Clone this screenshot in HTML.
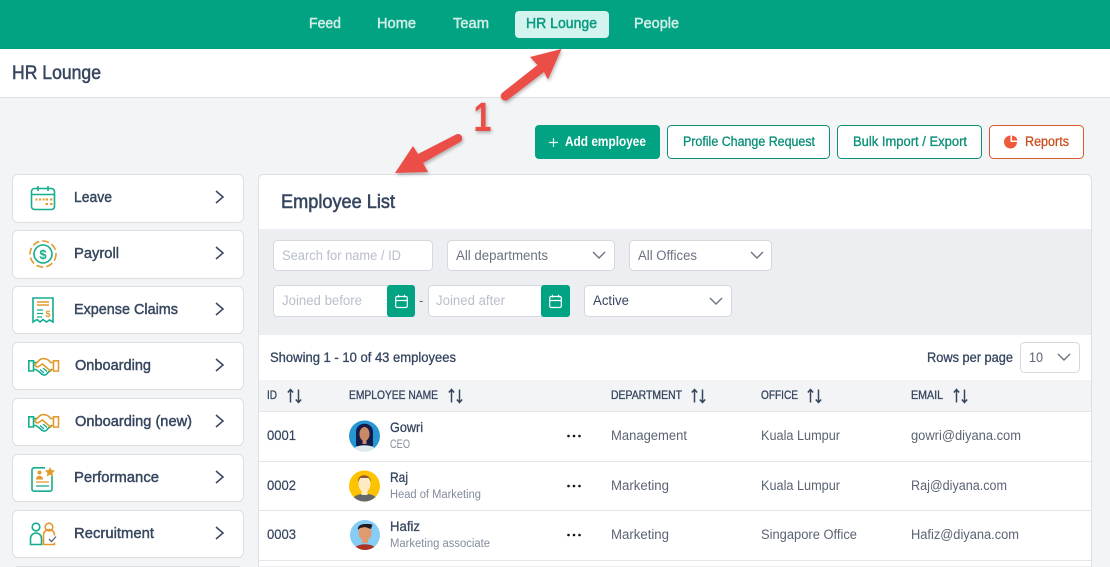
<!DOCTYPE html>
<html lang="en"><head><meta charset="utf-8"><title>HR Lounge</title>
<style>
html,body{margin:0;padding:0;width:1110px;height:567px;overflow:hidden;background:#f3f4f6}
svg{display:block;font-family:"Liberation Sans",Arial,sans-serif}
.n{font-size:15px;fill:#cfeee7;stroke:#cfeee7;stroke-width:.5}
.m{font-size:15px;fill:#36465f;stroke:#36465f;stroke-width:.45}
.ph{font-size:13.500px;fill:#b9bfca}
.sel{font-size:13.500px;fill:#6b7280}
.hd{font-size:11.500px;fill:#36465f;stroke:#36465f;stroke-width:.3}
.c{font-size:13.500px;fill:#5b6474}
.id{font-size:14px;fill:#36465f;stroke:#36465f;stroke-width:.2}
.nm{font-size:14px;fill:#36465f;stroke:#36465f;stroke-width:.3}
.sub{font-size:11.500px;fill:#838b9c}
.arr{fill:none;stroke:#36465f;stroke-width:1.500}
.g{fill:none;stroke:#14ad8e;stroke-width:1.600}
.o{fill:none;stroke:#e39a2d;stroke-width:1.600}
</style></head><body>
<svg width="1110" height="567" viewBox="0 0 1110 567" xmlns="http://www.w3.org/2000/svg">
<defs>
<filter id="sh" x="-20%" y="-20%" width="140%" height="140%"><feDropShadow dx="1" dy="2" stdDeviation="1.500" flood-color="#000" flood-opacity=".28"/></filter>
<g id="sort"><path class="arr" d="M3.500 14V1M.8 4L3.500 1 6.200 4M11.500 1V14M8.800 11L11.500 14 14.200 11"/></g>
<path id="chev" d="M0 0L7 6 0 12" fill="none" stroke="#36465f" stroke-width="1.500"/>
<path id="dn" d="M0 0L6 6 12 0" fill="none" stroke="#6b7280" stroke-width="1.400"/>
<g id="cal"><rect x="0.700" y="2.500" width="11.600" height="11" rx="1.500" fill="none" stroke="#fff" stroke-width="1.200"/><path d="M.7 6.500H12.300M3.500 .8V3.500M9.500 .8V3.500" stroke="#fff" stroke-width="1.200" fill="none"/></g>
<g id="hs">
<path class="g" d="M.8 3.800H5.500V14H.8zM5.500 5.500H8.500M5.500 12.500H8M8 12.500l6.500 5c2 1 4 .5 5-1.500l4.500-4"/>
<path d="M12 12.500l4 3.500M15 11l4 3.500" stroke="#14ad8e" stroke-width="1.300" fill="none"/>
<path class="o" d="M25.500 3.800h5v10.200h-5zM25.500 5.500h-3c-2-4-8-5-11-2.500l-4 4c-1 2 1 3.500 3 2.500l4-2.500 8 7 2-2"/>
</g>
</defs>

<rect width="1110" height="567" fill="#f3f4f6"/>
<!-- top bar -->
<rect width="1110" height="49" fill="#02a382"/>
<rect x="515" y="11" width="94" height="27" rx="4" fill="#d3f4ee"/>
<text class="n" x="309" y="28" textLength="32" lengthAdjust="spacingAndGlyphs">Feed</text>
<text class="n" x="377" y="28" textLength="39" lengthAdjust="spacingAndGlyphs">Home</text>
<text class="n" x="453" y="28" textLength="36" lengthAdjust="spacingAndGlyphs">Team</text>
<text class="n" x="526" y="28" textLength="71" lengthAdjust="spacingAndGlyphs" style="fill:#0b9a80;stroke:#0b9a80">HR Lounge</text>
<text class="n" x="634" y="28" textLength="45" lengthAdjust="spacingAndGlyphs">People</text>
<!-- sub header -->
<rect y="49" width="1110" height="48" fill="#fff"/>
<rect y="97" width="1110" height="1" fill="#dfe1e5"/>
<text x="12" y="79" font-size="19" fill="#36465f" textLength="89" lengthAdjust="spacingAndGlyphs" style="stroke:#36465f;stroke-width:.5">HR Lounge</text>

<!-- buttons -->
<rect x="535" y="125" width="125" height="34" rx="4" fill="#02a382"/>
<path d="M549 142.500h9M553.500 138v9" stroke="#e6f7f3" stroke-width="1.200"/>
<text x="565" y="146" font-size="14" font-weight="700" fill="#fff" textLength="81" lengthAdjust="spacingAndGlyphs">Add employee</text>
<rect x="667.500" y="125.500" width="162" height="33" rx="4" fill="#fff" stroke="#0a8f78"/>
<text x="683" y="146" font-size="13.500" fill="#0a8f78" textLength="132" lengthAdjust="spacingAndGlyphs" style="stroke:#0a8f78;stroke-width:.3">Profile Change Request</text>
<rect x="837.500" y="125.500" width="144" height="33" rx="4" fill="#fff" stroke="#0a8f78"/>
<text x="853" y="146" font-size="13.500" fill="#0a8f78" textLength="114" lengthAdjust="spacingAndGlyphs" style="stroke:#0a8f78;stroke-width:.3">Bulk Import / Export</text>
<rect x="989.500" y="125.500" width="94" height="33" rx="4" fill="#fff" stroke="#d95a2b"/>
<path d="M1010.500 135.500v6.500h6.500a6.500 6.500 0 1 1-6.500-6.500z" fill="#f0593b"/><path d="M1012 135.500a6 6 0 0 1 5.500 5h-5.500z" fill="#f0593b"/>
<text x="1025" y="146" font-size="13.500" fill="#c8501f" textLength="44" lengthAdjust="spacingAndGlyphs" style="stroke:#c8501f;stroke-width:.3">Reports</text>

<!-- sidebar cards -->
<g fill="#fff" stroke="#dcdfe3">
<rect x="12.500" y="174.500" width="231" height="48" rx="5"/>
<rect x="12.500" y="230.500" width="231" height="48" rx="5"/>
<rect x="12.500" y="286.500" width="231" height="47" rx="5"/>
<rect x="12.500" y="342.500" width="231" height="47" rx="5"/>
<rect x="12.500" y="398.500" width="231" height="47" rx="5"/>
<rect x="12.500" y="454.500" width="231" height="47" rx="5"/>
<rect x="12.500" y="510.500" width="231" height="47" rx="5"/>
</g>
<rect x="16" y="566" width="224" height="1" fill="#dcdfe3"/>
<text class="m" x="74" y="202" textLength="38" lengthAdjust="spacingAndGlyphs">Leave</text>
<text class="m" x="74" y="258" textLength="45" lengthAdjust="spacingAndGlyphs">Payroll</text>
<text class="m" x="74" y="314" textLength="104" lengthAdjust="spacingAndGlyphs">Expense Claims</text>
<text class="m" x="75" y="370" textLength="76" lengthAdjust="spacingAndGlyphs">Onboarding</text>
<text class="m" x="75" y="426" textLength="117" lengthAdjust="spacingAndGlyphs">Onboarding (new)</text>
<text class="m" x="74" y="482" textLength="85" lengthAdjust="spacingAndGlyphs">Performance</text>
<text class="m" x="74" y="538" textLength="80" lengthAdjust="spacingAndGlyphs">Recruitment</text>
<use href="#chev" x="216" y="191"/><use href="#chev" x="216" y="247"/><use href="#chev" x="216" y="303"/><use href="#chev" x="216" y="359"/><use href="#chev" x="216" y="415"/><use href="#chev" x="216" y="471"/><use href="#chev" x="216" y="527"/>

<!-- leave icon -->
<rect class="g" x="31.500" y="188.500" width="23" height="21" rx="3"/>
<path class="g" d="M31.500 194.500h23M38 186v5M48 186v5"/>
<path d="M35.500 199.500h2M39 199.500h2M42.500 199.500h2M45.500 199.500h2.500M50 199.500h2.500M45.500 204h2.500M50 204h2.500" stroke="#e39a2d" stroke-width="2" fill="none"/>
<!-- payroll -->
<circle cx="43" cy="254" r="13" fill="none" stroke="#e39a2d" stroke-width="1.600" stroke-dasharray="7 3"/>
<circle class="g" cx="43" cy="254" r="9"/>
<text x="43" y="259" text-anchor="middle" font-size="13" font-weight="700" fill="#14ad8e">$</text>
<!-- expense -->
<path class="g" d="M33 298h20v24l-3.500-2-3 2-3.500-2.500-3 2.500-3-2.500-4 2.500z"/>
<path d="M37 302h12M37 305h12" stroke="#e39a2d" stroke-width="1.400"/>
<path d="M37 310h6M37 313.500h6M37 317h5" stroke="#14ad8e" stroke-width="1.200"/>
<text x="48" y="317" text-anchor="middle" font-size="9" font-weight="700" fill="#e39a2d">$</text>
<!-- onboarding -->
<use href="#hs" x="28" y="357"/>
<use href="#hs" x="28" y="413"/>
<!-- performance -->
<path class="g" d="M45 467.800H34a2 2 0 0 0-2 2v19.400a2 2 0 0 0 2 2h16a2 2 0 0 0 2-2V476"/>
<circle cx="39.500" cy="472.500" r="2" fill="#e39a2d"/>
<path d="M36 479.500c0-5 7-5 7 0z" fill="#e39a2d"/>
<path d="M36 482h13" stroke="#e39a2d" stroke-width="1.300"/><path d="M36 486h13" stroke="#14ad8e" stroke-width="1.300"/>
<path d="M50 467l1.500 3 3.500.5-2.500 2.500.7 3.500-3.200-1.700-3.200 1.700.7-3.500-2.500-2.500 3.500-.5z" fill="#e39a2d"/>
<!-- recruitment -->
<circle class="g" cx="36" cy="527" r="3.800"/>
<path class="g" d="M30.500 544.500v-6a5.500 5.500 0 0 1 11 0v6z"/>
<circle class="o" cx="49" cy="527" r="3.800"/>
<path class="o" d="M54.500 535.500v-.5a5.500 5.500 0 0 0-11 0v9.500h11v-2"/>
<path d="M49 539l2.500 2.500 4.500-5" fill="none" stroke="#5b6474" stroke-width="1.300"/>

<!-- main card -->
<path d="M258.500 567V179.500a5 5 0 0 1 5-5H1086.500a5 5 0 0 1 5 5V567z" fill="#fff" stroke="#dcdfe3"/>
<text x="281" y="208" font-size="19" fill="#36465f" textLength="114" lengthAdjust="spacingAndGlyphs" style="stroke:#36465f;stroke-width:.55">Employee List</text>
<rect x="259" y="229" width="832" height="106" fill="#eceef2"/>

<!-- filters -->
<g fill="#fff" stroke="#d5d8de">
<rect x="273.500" y="240.500" width="159" height="30" rx="4"/>
<rect x="447.500" y="240.500" width="167" height="30" rx="4"/>
<rect x="629.500" y="240.500" width="142" height="30" rx="4"/>
<rect x="273.500" y="285.500" width="125" height="31" rx="4"/>
<rect x="428.500" y="285.500" width="125" height="31" rx="4"/>
<rect x="584.500" y="285.500" width="147" height="31" rx="4"/>
</g>
<text class="ph" x="282" y="260" textLength="119" lengthAdjust="spacingAndGlyphs">Search for name / ID</text>
<text class="sel" x="456" y="260" textLength="92" lengthAdjust="spacingAndGlyphs">All departments</text>
<text class="sel" x="638" y="260" textLength="59" lengthAdjust="spacingAndGlyphs">All Offices</text>
<use href="#dn" x="593" y="252"/><use href="#dn" x="751" y="252"/><use href="#dn" x="710" y="298"/>
<text class="ph" x="282" y="305" textLength="80" lengthAdjust="spacingAndGlyphs">Joined before</text>
<rect x="387" y="285" width="28" height="32" rx="3" fill="#02a382"/>
<use href="#cal" x="395" y="294"/>
<text x="419" y="305" font-size="13" fill="#5b6474">-</text>
<text class="ph" x="436" y="305" textLength="69" lengthAdjust="spacingAndGlyphs">Joined after</text>
<rect x="541" y="285" width="29" height="32" rx="3" fill="#02a382"/>
<use href="#cal" x="549" y="294"/>
<text x="593" y="305" font-size="13.500" fill="#36465f" textLength="36" lengthAdjust="spacingAndGlyphs">Active</text>

<!-- table top -->
<text x="270" y="362" font-size="13.500" fill="#36465f" textLength="186" lengthAdjust="spacingAndGlyphs" style="stroke:#36465f;stroke-width:.3">Showing 1 - 10 of 43 employees</text>
<text x="927" y="362" font-size="13.500" fill="#36465f" textLength="86" lengthAdjust="spacingAndGlyphs" style="stroke:#36465f;stroke-width:.3">Rows per page</text>
<rect x="1020.500" y="342.500" width="59" height="30" rx="4" fill="#fff" stroke="#d5d8de"/>
<text x="1029" y="362" font-size="14" fill="#5b6474" textLength="14" lengthAdjust="spacingAndGlyphs">10</text>
<use href="#dn" x="1058" y="354"/>

<rect x="259" y="380" width="832" height="31" fill="#f3f4f6"/>
<rect x="259" y="411" width="832" height="1" fill="#e3e5e9"/>
<text class="hd" x="267" y="399" textLength="10" lengthAdjust="spacingAndGlyphs">ID</text>
<text class="hd" x="349" y="399" textLength="89" lengthAdjust="spacingAndGlyphs">EMPLOYEE NAME</text>
<text class="hd" x="611" y="399" textLength="71" lengthAdjust="spacingAndGlyphs">DEPARTMENT</text>
<text class="hd" x="761" y="399" textLength="37" lengthAdjust="spacingAndGlyphs">OFFICE</text>
<text class="hd" x="911" y="399" textLength="32" lengthAdjust="spacingAndGlyphs">EMAIL</text>
<use href="#sort" x="287" y="388.500"/><use href="#sort" x="448" y="388.500"/><use href="#sort" x="691" y="388.500"/><use href="#sort" x="807" y="388.500"/><use href="#sort" x="953" y="388.500"/>

<!-- rows -->
<rect x="259" y="461" width="832" height="1" fill="#e3e5e9"/>
<rect x="259" y="510" width="832" height="1" fill="#e3e5e9"/>
<rect x="259" y="560" width="832" height="1" fill="#e3e5e9"/>

<text class="id" x="267" y="440" textLength="29" lengthAdjust="spacingAndGlyphs">0001</text>
<text class="id" x="267" y="490" textLength="29" lengthAdjust="spacingAndGlyphs">0002</text>
<text class="id" x="267" y="539" textLength="29" lengthAdjust="spacingAndGlyphs">0003</text>

<text class="nm" x="390" y="432" textLength="33" lengthAdjust="spacingAndGlyphs">Gowri</text>
<text class="sub" x="390" y="448" textLength="20" lengthAdjust="spacingAndGlyphs">CEO</text>
<text class="nm" x="390" y="482" textLength="18" lengthAdjust="spacingAndGlyphs">Raj</text>
<text class="sub" x="390" y="498" textLength="91" lengthAdjust="spacingAndGlyphs">Head of Marketing</text>
<text class="nm" x="390" y="531" textLength="30" lengthAdjust="spacingAndGlyphs">Hafiz</text>
<text class="sub" x="390" y="547" textLength="100" lengthAdjust="spacingAndGlyphs">Marketing associate</text>

<g fill="#111"><circle cx="568.500" cy="436" r="1.300"/><circle cx="574" cy="436" r="1.300"/><circle cx="579.500" cy="436" r="1.300"/>
<circle cx="568.500" cy="486" r="1.300"/><circle cx="574" cy="486" r="1.300"/><circle cx="579.500" cy="486" r="1.300"/>
<circle cx="568.500" cy="535" r="1.300"/><circle cx="574" cy="535" r="1.300"/><circle cx="579.500" cy="535" r="1.300"/></g>

<text class="c" x="611" y="440" textLength="76" lengthAdjust="spacingAndGlyphs">Management</text>
<text class="c" x="611" y="490" textLength="58" lengthAdjust="spacingAndGlyphs">Marketing</text>
<text class="c" x="611" y="539" textLength="58" lengthAdjust="spacingAndGlyphs">Marketing</text>
<text class="c" x="761" y="440" textLength="79" lengthAdjust="spacingAndGlyphs">Kuala Lumpur</text>
<text class="c" x="761" y="490" textLength="79" lengthAdjust="spacingAndGlyphs">Kuala Lumpur</text>
<text class="c" x="761" y="539" textLength="96" lengthAdjust="spacingAndGlyphs">Singapore Office</text>
<text class="c" x="911" y="440" textLength="110" lengthAdjust="spacingAndGlyphs">gowri@diyana.com</text>
<text class="c" x="911" y="490" textLength="96" lengthAdjust="spacingAndGlyphs">Raj@diyana.com</text>
<text class="c" x="911" y="539" textLength="108" lengthAdjust="spacingAndGlyphs">Hafiz@diyana.com</text>

<!-- avatars -->
<clipPath id="a1"><circle cx="364.500" cy="436" r="15.500"/></clipPath>
<g clip-path="url(#a1)"><rect x="349" y="420" width="32" height="32" fill="#2596d1"/>
<path d="M356 446v-14c0-11 17-11 17 0v14z" fill="#141a4a"/><ellipse cx="364.500" cy="434" rx="5" ry="7" fill="#c98a63"/><rect x="362.500" y="439" width="4" height="5" fill="#c98a63"/><path d="M352 452c1-9 24-9 25 0z" fill="#dfe9ee"/></g>
<clipPath id="a2"><circle cx="364.500" cy="486" r="15.500"/></clipPath>
<g clip-path="url(#a2)"><rect x="349" y="470" width="32" height="32" fill="#fdc200"/>
<path d="M351 502c1-11 27-11 27 0z" fill="#63686b"/><ellipse cx="364.500" cy="484" rx="6" ry="8" fill="#fcebc4"/><rect x="361.500" y="488" width="6" height="7" fill="#fcebc4"/><path d="M358 482c-1-9 13-9 13 0l-2-4h-9z" fill="#8c5a33"/></g>
<clipPath id="a3"><circle cx="365" cy="535" r="15"/></clipPath>
<g clip-path="url(#a3)"><rect x="349" y="520" width="32" height="31" fill="#85cdf5"/>
<path d="M353 551c1-9 23-9 24 0z" fill="#ab3427"/><ellipse cx="365" cy="533" rx="6.500" ry="7.500" fill="#e19a70"/><rect x="362" y="538" width="6" height="5" fill="#e19a70"/><path d="M358 530c-1-4 3-6 7-6s9 0 7 2l-1 3-6-2-5 1z" fill="#1f1c22"/></g>

<!-- annotation -->
<g filter="url(#sh)">
<path d="M561.500 49L530 57 537.500 65 502 93a4.500 4.500 0 0 0 5.500 7L544 72 548 79.500z" fill="#eb4d46"/>
<text x="473.500" y="131" font-size="41" font-weight="700" fill="#eb4d46" textLength="18" lengthAdjust="spacingAndGlyphs">1</text>
<path d="M395 173L428 172 423 163 460 142a4 4 0 0 0-4-7.500L418 154 413 146z" fill="#eb4d46"/>
</g>
</svg>
</body></html>
